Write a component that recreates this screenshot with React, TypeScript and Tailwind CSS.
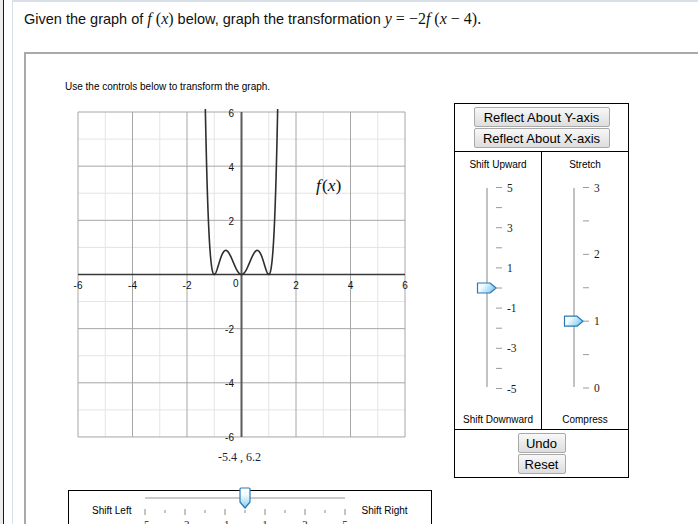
import React from 'react';

// graph geometry (svg-local coords)
const X0 = 13;
const Y0 = 12;
const SX = 27.25;
const SY = 27.08;
const px = (x: number) => X0 + (x + 6) * SX;
const py = (y: number) => Y0 + (6 - y) * SY;

const f = (x: number) => 6 * x * x * (x * x - 1) * (x * x - 1);

function curvePath() {
  const pts: string[] = [];
  for (let x = -1.36; x <= 1.3601; x += 0.01) {
    pts.push(`${px(x).toFixed(2)},${py(f(x)).toFixed(2)}`);
  }
  return 'M' + pts.join(' L');
}

const range = (a: number, b: number) => Array.from({ length: b - a + 1 }, (_, i) => a + i);

function Graph() {
  const ticks = range(-6, 6);
  return (
    <svg width={375} height={370} className="block shrink-0" style={{ overflow: 'visible' }}>
      <defs>
        <clipPath id="plot">
          <rect x={px(-6)} y={py(6) - 3} width={px(6) - px(-6)} height={py(-6) - py(6) + 3} />
        </clipPath>
      </defs>
      {/* minor grid */}
      {ticks.filter((i) => i % 2 !== 0).map((i) => (
        <g key={'m' + i} stroke="#e4e4e4" strokeWidth={1}>
          <line x1={px(i)} x2={px(i)} y1={py(6)} y2={py(-6)} />
          <line x1={px(-6)} x2={px(6)} y1={py(i)} y2={py(i)} />
        </g>
      ))}
      {/* major grid */}
      {ticks.filter((i) => i % 2 === 0).map((i) => (
        <g key={'M' + i} stroke="#a6a6a6" strokeWidth={1}>
          <line x1={px(i)} x2={px(i)} y1={py(6)} y2={py(-6)} />
          <line x1={px(-6)} x2={px(6)} y1={py(i)} y2={py(i)} />
        </g>
      ))}
      {/* axes */}
      <line x1={px(-6)} x2={px(6)} y1={py(0)} y2={py(0)} stroke="#3a3a3a" strokeWidth={1.6} />
      <line x1={px(0)} x2={px(0)} y1={py(6)} y2={py(-6)} stroke="#5a5a5a" strokeWidth={2} />

      {/* axis labels */}
      <g fontFamily="'Liberation Sans', Arial, sans-serif" fontSize={10} fill="#111">
        {[-6, -4, -2, 2, 4, 6].map((i) => (
          <text key={'x' + i} x={px(i)} y={py(0) + 15} textAnchor="middle">
            {i < 0 ? `-${-i}` : i}
          </text>
        ))}
        <text x={px(0) - 3} y={py(0) + 13} textAnchor="end">0</text>
        {[6, 4, 2, -2, -4, -6].map((j) => (
          <text key={'y' + j} x={px(0) - 7.5} y={py(j) + 4.5} textAnchor="end">
            {j < 0 ? `-${-j}` : j}
          </text>
        ))}
      </g>

      <path d={curvePath()} fill="none" stroke="#2e2e2e" strokeWidth={1.6} clipPath="url(#plot)" />

      <text x={251} y={91} fontFamily="'Liberation Serif', 'Times New Roman', serif" fontSize={17.5} fill="#111">
        <tspan fontStyle="italic">f</tspan>
        <tspan dx={1}>(</tspan>
        <tspan fontStyle="italic">x</tspan>
        <tspan>)</tspan>
      </text>

      <text x={153} y={361} fontFamily="'Liberation Serif', 'Times New Roman', serif" fontSize={12} fill="#1c1c40">
        -5.4 , 6.2
      </text>
    </svg>
  );
}

function Thumb({ d, id, vertical }: { d: string; id: string; vertical?: boolean }) {
  return (
    <>
      <defs>
        <linearGradient id={id} x1="0" y1="0" x2={vertical ? '0' : '1'} y2={vertical ? '1' : '0.4'}>
          <stop offset="0" stopColor="#ffffff" />
          <stop offset="0.35" stopColor="#f2fbff" />
          <stop offset="1" stopColor="#86cdf0" />
        </linearGradient>
      </defs>
      <path d={d} fill={`url(#${id})`} stroke="#2a79b6" strokeWidth={1.2} strokeLinejoin="round" />
    </>
  );
}

const serif = "'Liberation Serif', 'Times New Roman', serif";

function VSlider({
  count,
  step,
  labels,
  thumbIndex,
  id,
}: {
  count: number;
  step: number;
  labels: Record<number, string>;
  thumbIndex: number;
  id: string;
}) {
  const ty = (i: number) => 16.5 + step * i;
  const cy = ty(thumbIndex);
  return (
    <svg width={86} height={243} className="block">
      <line x1={32} x2={32} y1={17} y2={216} stroke="#c2c2c2" strokeWidth={2} />
      {range(0, count - 1).map((i) => (
        <line key={i} x1={41} x2={47} y1={ty(i)} y2={ty(i)} stroke="#9a9a9a" strokeWidth={1} />
      ))}
      {Object.entries(labels).map(([i, t]) => (
        <text key={i} x={52} y={ty(Number(i)) + 4} fontFamily={serif} fontSize={11.5} fill="#1a1a1a">
          {t}
        </text>
      ))}
      <Thumb id={id} d={`M22.5,${cy - 5} L35,${cy - 5} L41,${cy} L35,${cy + 5} L22.5,${cy + 5} Z`} />
    </svg>
  );
}

function Btn({ w, children }: { w: string; children: React.ReactNode }) {
  return (
    <button
      className={`${w} h-[20px] bg-linear-to-b from-[#f8f8f8] to-[#dddddd] border border-[#a9a9a9] rounded-[2px] text-[13px] leading-none text-black font-['Liberation_Sans',Arial,sans-serif]`}
    >
      {children}
    </button>
  );
}

function HSlider() {
  return (
    <svg width={220} height={40} className="block shrink-0" style={{ overflow: 'visible' }}>
      <line x1={10} x2={210} y1={7} y2={7} stroke="#cacaca" strokeWidth={2} />
      {range(0, 10).map((i) => (
        <line
          key={i}
          x1={10 + 20 * i}
          x2={10 + 20 * i}
          y1={i % 2 === 0 ? 18 : 19}
          y2={i % 2 === 0 ? 24 : 22}
          stroke="#8a8a8a"
          strokeWidth={1}
        />
      ))}
      {[-5, -3, -1, 1, 3, 5].map((v) => (
        <text key={v} x={10 + 20 * (v + 5)} y={37} textAnchor="middle" fontFamily={serif} fontSize={11} fill="#1a1a1a">
          {v}
        </text>
      ))}
      <Thumb id="hthumb" vertical d="M106,-3 L114,-3 Q115,-3 115,-2 L115,11 L110,17 L105,11 L105,-2 Q105,-3 106,-3 Z" />
    </svg>
  );
}

export default function App() {
  return (
    <div className="h-[524px] w-[698px] overflow-hidden bg-white flex font-['Liberation_Sans',Arial,sans-serif] text-black">
      <div className="w-[3px] shrink-0 bg-[#ececec]" />
      <div className="w-px shrink-0 bg-[#1a1a1a]" />
      <div className="w-[8px] shrink-0 bg-white" />
      <div className="flex-1 min-w-0 border-l border-t-2 border-[#d7dfe9] flex flex-col">
        <p className="pl-[11px] pt-[9px] text-[14.5px] leading-[16px] whitespace-nowrap text-[#111]">
          Given the graph of{' '}
          <span className="font-['Liberation_Serif',serif] text-[16px]">
            <i>f</i> (<i>x</i>)
          </span>{' '}
          below, graph the transformation{' '}
          <span className="font-['Liberation_Serif',serif] text-[16px]">
            <i>y</i> = −2<i>f</i> (<i>x</i> − 4).
          </span>
        </p>

        <div className="ml-[11px] mt-[25px] flex-1 border-t-2 border-l-2 border-[#a9a9a9] pl-[39px] pt-[27px]">
          <p className="text-[10px] leading-[11px] whitespace-nowrap">Use the controls below to transform the graph.</p>

          <div className="flex items-start mt-[8px]">
            <Graph />
            <div className="ml-[14px] mt-[3px] w-[175px] h-[375px] shrink-0 border border-black flex flex-col">
              <div className="h-[48px] border-b border-black flex flex-col items-center pt-[3px] gap-px">
                <Btn w="w-[136px]">Reflect About Y-axis</Btn>
                <Btn w="w-[136px]">Reflect About X-axis</Btn>
              </div>
              <div className="h-[278px] border-b border-black flex">
                <div className="w-[87px] border-r border-black flex flex-col items-center pt-[7px]">
                  <span className="text-[10px] leading-[12px] whitespace-nowrap">Shift Upward</span>
                  <VSlider
                    id="up"
                    count={11}
                    step={20.1}
                    thumbIndex={5}
                    labels={{ 0: '5', 2: '3', 4: '1', 6: '-1', 8: '-3', 10: '-5' }}
                  />
                  <span className="text-[10px] leading-[12px] whitespace-nowrap">Shift Downward</span>
                </div>
                <div className="flex-1 flex flex-col items-center pt-[7px]">
                  <span className="text-[10px] leading-[12px] whitespace-nowrap">Stretch</span>
                  <VSlider
                    id="st"
                    count={7}
                    step={33.42}
                    thumbIndex={4}
                    labels={{ 0: '3', 2: '2', 4: '1', 6: '0' }}
                  />
                  <span className="text-[10px] leading-[12px] whitespace-nowrap">Compress</span>
                </div>
              </div>
              <div className="flex-1 flex flex-col items-center pt-[3px] gap-px">
                <Btn w="w-[48px]">Undo</Btn>
                <Btn w="w-[48px]">Reset</Btn>
              </div>
            </div>
          </div>

          <div className="ml-[3px] mt-[12px] w-[364px] h-[60px] border border-black flex items-start">
            <span className="ml-[23px] mt-[14px] text-[10px] leading-[12px] whitespace-nowrap">Shift Left</span>
            <div className="ml-[4px]">
              <HSlider />
            </div>
            <span className="ml-[6px] mt-[14px] text-[10px] leading-[12px] whitespace-nowrap">Shift Right</span>
          </div>
        </div>
      </div>
    </div>
  );
}
